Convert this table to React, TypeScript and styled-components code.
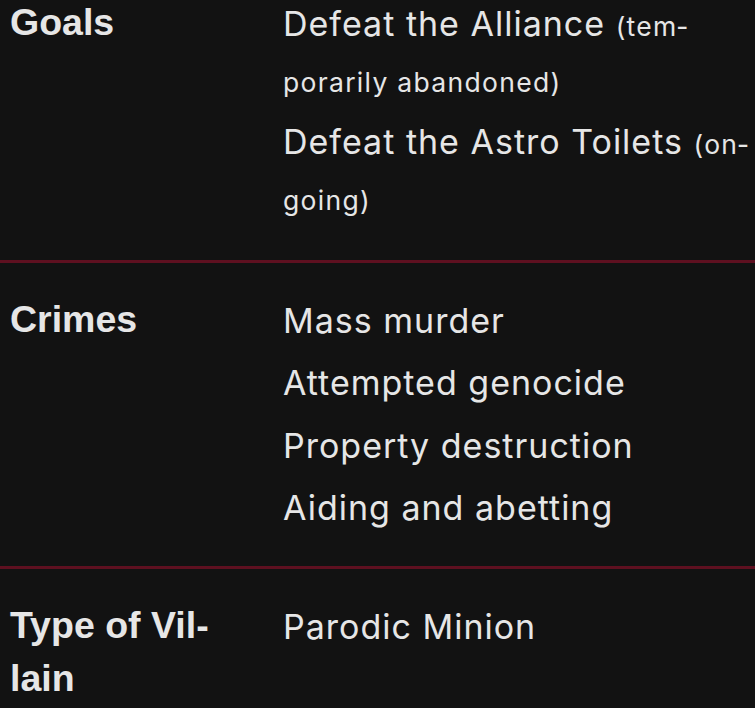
import React from 'react'
import styled, { createGlobalStyle } from 'styled-components'

const Global = createGlobalStyle`
  body {
    margin: 0;
    background: #121212;
    overflow: hidden;
  }
`

const Table = styled.div`
  width: 755px;
  margin-top: -4px;
  background: #121212;
  color: #e6e6e6;
`

const Row = styled.section`
  display: grid;
  grid-template-columns: 283px 1fr;
  padding: 30px 0 30px;
  border-bottom: 3px solid #5e1020;

  /* the top row is cut by the screenshot */
  &:first-child {
    padding-top: 0;
    padding-bottom: 34px;
  }
  &:last-child {
    border-bottom: none;
  }
`

const Label = styled.h3`
  margin: 0;
  padding: 0 40px 0 10px;
  font-family: 'Liberation Sans', Arial, sans-serif;
  font-weight: 700;
  font-size: 37.5px;
  line-height: 53px;
`

const Values = styled.div<{ $gap: number }>`
  display: flex;
  flex-direction: column;
  gap: ${p => p.$gap}px;
  padding-right: 3px;
`

const Value = styled.div`
  font-family: Inter, 'Noto Sans', sans-serif;
  font-size: 34px;
  line-height: 56px;
  letter-spacing: 1px;
`

const Note = styled.small`
  font-size: 26.5px;
  line-height: 1;
  letter-spacing: 1.3px;
`

const goals = [
  { text: 'Defeat the Alliance', note: '(tem\u00ADporarily abandoned)' },
  { text: 'Defeat the Astro Toilets', note: '(on\u00ADgoing)' },
]

const crimes = ['Mass murder', 'Attempted genocide', 'Property destruction', 'Aiding and abetting']

export default function App() {
  return (
    <>
      <Global />
      <Table lang="en">
        <Row>
          <Label>Goals</Label>
          <Values $gap={6}>
            {goals.map(g => (
              <Value key={g.text}>
                {g.text} <Note>{g.note}</Note>
              </Value>
            ))}
          </Values>
        </Row>
        <Row>
          <Label>Crimes</Label>
          <Values $gap={6.3}>
            {crimes.map(c => (
              <Value key={c}>{c}</Value>
            ))}
          </Values>
        </Row>
        <Row>
          <Label>Type of Vil{'\u00AD'}lain</Label>
          <Values $gap={0}>
            <Value>Parodic Minion</Value>
          </Values>
        </Row>
      </Table>
    </>
  )
}
